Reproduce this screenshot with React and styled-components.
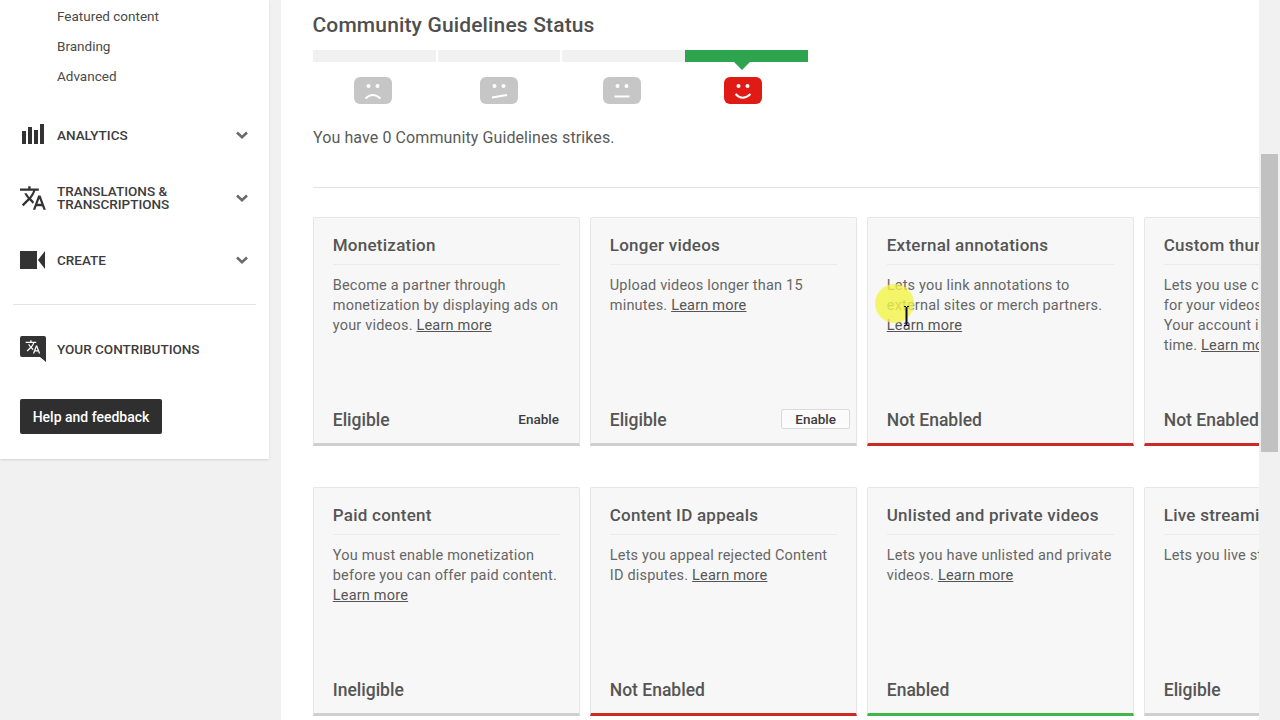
import styled, { createGlobalStyle } from 'styled-components';

const GlobalStyle = createGlobalStyle`
  html, body {
    margin: 0;
    padding: 0;
    background: #f1f1f1;
    font-family: Roboto, "Liberation Sans", sans-serif;
    overflow: hidden;
  }
  * {
    box-sizing: border-box;
  }
`;

const Page = styled.div`
  position: relative;
  display: flex;
  width: 1280px;
  height: 720px;
  overflow: hidden;
  background: #f1f1f1;
`;

const Sidebar = styled.nav`
  flex: none;
  width: 269px;
  height: 459px;
  margin-right: 12px;
  padding-top: 1px;
  background: #fff;
  box-shadow: 0 1px 2px rgba(0, 0, 0, 0.12);
`;

const SubItem = styled.div`
  height: 30px;
  padding-left: 57px;
  font-size: 13.5px;
  line-height: 30px;
  color: #4a4a4a;
`;

const NavRow = styled.div`
  display: flex;
  align-items: center;
  height: 26px;
  margin-top: ${(p) => p.$top || 0}px;
  padding: 0 20px;
`;

const NavIcon = styled.span`
  flex: none;
  display: flex;
  align-items: center;
  width: 37px;
  height: 26px;
  color: #333;
`;

const NavLabel = styled.span`
  flex: 1;
  font-size: 13.5px;
  font-weight: 500;
  line-height: 13px;
  color: #3c3c3c;
  text-transform: uppercase;
`;

const Chevron = styled.svg`
  flex: none;
  width: 12px;
  height: 8px;
  margin-right: 1px;
  fill: none;
  stroke: #6a6a6a;
  stroke-width: 2.6;
`;

const SideDivider = styled.hr`
  height: 1px;
  margin: 31px 13px 31px;
  border: none;
  background: #e4e4e4;
`;

const HelpButton = styled.button`
  display: block;
  width: 142px;
  height: 35px;
  margin: 37px 0 0 20px;
  padding: 0;
  background: #2f2f2f;
  border: none;
  border-radius: 2px;
  font-family: inherit;
  font-size: 14px;
  font-weight: 500;
  color: #fff;
`;

const Main = styled.main`
  flex: 1;
  min-width: 0;
  height: 720px;
  padding: 13px 0 0 32px;
  overflow: hidden;
  background: #fff;
`;

const Title = styled.h2`
  margin: 0 0 0 -0.5px;
  font-size: 21px;
  font-weight: 500;
  line-height: 24px;
  letter-spacing: 0.15px;
  color: #4f4f4f;
`;

const StrikeBar = styled.div`
  display: flex;
  width: 495px;
  height: 12px;
  margin-top: 13px;
`;

const Segment = styled.div`
  position: relative;
  flex: none;
  width: ${(p) => p.$width}px;
  margin-right: ${(p) => p.$gap || 0}px;
  background: ${(p) => (p.$active ? '#2ea44f' : '#f1f1f1')};

  ${(p) =>
    p.$active &&
    `
    &::after {
      content: '';
      position: absolute;
      top: 12px;
      left: 49px;
      border-left: 8px solid transparent;
      border-right: 8px solid transparent;
      border-top: 8px solid #2ea44f;
    }
  `}
`;

const Faces = styled.div`
  display: flex;
  height: 27px;
  margin-top: 15px;
`;

const Face = styled.svg`
  display: block;
  flex: none;
  width: 38px;
  height: 27px;
  margin-left: ${(p) => p.$left}px;
`;

const Strikes = styled.p`
  margin: 24px 0 0;
  font-size: 16px;
  line-height: 20px;
  letter-spacing: 0.1px;
  color: #5a5a5a;
`;

const Divider = styled.hr`
  height: 1px;
  margin: 39px 0 29px;
  border: none;
  background: #e4e4e4;
`;

const CardRow = styled.div`
  display: flex;
  gap: 10px;
  margin-bottom: 41px;
`;

const Card = styled.section`
  flex: none;
  display: flex;
  flex-direction: column;
  width: 267px;
  height: 229px;
  padding: 0 19px 0 18.75px;
  background: #f7f7f7;
  border: 1px solid #e6e6e6;
  border-bottom: 3px solid ${(p) => p.$accent};
  border-radius: 2px 2px 0 0;
`;

const CardTitle = styled.h3`
  height: 47px;
  margin: 0;
  font-size: 17px;
  font-weight: 500;
  line-height: 55px;
  letter-spacing: 0.25px;
  white-space: nowrap;
  color: #555;
  border-bottom: 1px solid #ebebeb;
`;

const CardText = styled.p`
  margin: 11px 0 0;
  font-size: 14.5px;
  line-height: 20px;
  letter-spacing: 0.2px;
  color: #666;

  a {
    color: #555;
    text-decoration: underline;
  }
`;

const CardFooter = styled.div`
  display: flex;
  align-items: center;
  justify-content: space-between;
  height: 28px;
  margin-top: auto;
  margin-bottom: 9px;
`;

const Status = styled.span`
  font-size: 17.5px;
  font-weight: 500;
  white-space: nowrap;
  color: #555;
`;

const EnableButton = styled.button`
  height: 20px;
  margin-right: -13px;
  margin-bottom: 2px;
  padding: 0 13px;
  background: ${(p) => (p.$outlined ? '#fbfbfb' : 'transparent')};
  border: 1px solid ${(p) => (p.$outlined ? '#d9d9d9' : 'transparent')};
  border-radius: 2px;
  font-family: inherit;
  font-size: 13.5px;
  font-weight: 500;
  color: #3c3c3c;
`;

const ScrollTrack = styled.div`
  flex: none;
  width: 21px;
  padding: 154px 2px 0;
  background: #f1f1f1;
`;

const ScrollThumb = styled.div`
  height: 298px;
  background: #c1c1c1;
`;

const Highlight = styled.div`
  position: absolute;
  top: 284px;
  left: 875px;
  width: 39px;
  height: 39px;
  background: radial-gradient(circle, rgba(244, 244, 70, 0.8) 60%, rgba(244, 244, 70, 0.5) 100%);
  border-radius: 50%;
`;

const TextCursor = styled.svg`
  position: absolute;
  top: 305px;
  left: 902px;
  width: 9px;
  height: 22px;
`;

const AnalyticsIcon = () => (
  <svg width="24" height="22" viewBox="0 0 24 22" fill="currentColor">
    <rect x="2" y="7" width="4" height="13" />
    <rect x="8" y="3" width="4" height="17" />
    <rect x="14" y="6" width="4" height="14" />
    <rect x="20" y="0" width="4" height="20" />
  </svg>
);

const TranslateIcon = () => (
  <svg width="27" height="27" viewBox="1 1 23 23" fill="currentColor">
    <path d="M12.87 15.07l-2.54-2.51.03-.03c1.74-1.94 2.98-4.17 3.71-6.53H17V4h-7V2H8v2H1v1.99h11.17C11.5 7.92 10.44 9.75 9 11.35 8.07 10.32 7.3 9.19 6.69 8h-2c.73 1.63 1.73 3.17 2.98 4.56l-5.09 5.02L4 19l5-5 3.11 3.11.76-2.04zM18.5 10h-2L12 22h2l1.12-3h4.75L21 22h2l-4.5-12zm-2.62 7l1.62-4.33L19.12 17h-3.24z" />
  </svg>
);

const CreateIcon = () => (
  <svg width="26" height="18" viewBox="0 0 26 18" fill="currentColor">
    <rect x="0" y="0" width="17" height="18" />
    <path d="M25 0v18L18 9z" />
  </svg>
);

const ContributionsIcon = () => (
  <svg width="26" height="26" viewBox="0 0 26 26">
    <path d="M2 0h22a2 2 0 0 1 2 2v24l-6-5H2a2 2 0 0 1-2-2V2a2 2 0 0 1 2-2z" fill="#333" />
    <g transform="translate(5 3) scale(0.66)">
      <path
        fill="#fff"
        d="M12.87 15.07l-2.54-2.51.03-.03c1.74-1.94 2.98-4.17 3.71-6.53H17V4h-7V2H8v2H1v1.99h11.17C11.5 7.92 10.44 9.75 9 11.35 8.07 10.32 7.3 9.19 6.69 8h-2c.73 1.63 1.73 3.17 2.98 4.56l-5.09 5.02L4 19l5-5 3.11 3.11.76-2.04zM18.5 10h-2L12 22h2l1.12-3h4.75L21 22h2l-4.5-12zm-2.62 7l1.62-4.33L19.12 17h-3.24z"
      />
    </g>
  </svg>
);

const ChevronDown = () => (
  <Chevron viewBox="0 0 12 8">
    <path d="M1 1.5L6 6.2l5-4.7" />
  </Chevron>
);

const mouths = {
  sad: 'M11.5 21.5q7-7 15 0',
  skew: 'M12 20.5l15-2.5',
  flat: 'M11.5 19.5h15',
  happy: 'M11.5 17q7 7.5 15 0',
};

const StrikeFace = ({ mood, color, left }) => (
  <Face viewBox="0 0 38 27" $left={left}>
    <rect width="38" height="27" rx="6" fill={color} />
    <circle cx="14.5" cy="9" r="2" fill="#fff" />
    <circle cx="23.5" cy="9" r="2" fill="#fff" />
    <path d={mouths[mood]} fill="none" stroke="#fff" strokeWidth="2" />
  </Face>
);

const firstRow = [
  {
    title: 'Monetization',
    text: 'Become a partner through monetization by displaying ads on your videos. ',
    status: 'Eligible',
    accent: '#cfcfcf',
    enable: 'plain',
  },
  {
    title: 'Longer videos',
    text: 'Upload videos longer than 15 minutes. ',
    status: 'Eligible',
    accent: '#cfcfcf',
    enable: 'outlined',
  },
  {
    title: 'External annotations',
    text: 'Lets you link annotations to external sites or merch partners. ',
    status: 'Not Enabled',
    accent: '#cc2a26',
  },
  {
    title: 'Custom thumbnails',
    text: (
      <>
        Lets you use custom thumbnails
        <br />
        for your videos.
        <br />
        Your account is not eligible at this time.{' '}
      </>
    ),
    status: 'Not Enabled',
    accent: '#cc2a26',
  },
];

const secondRow = [
  {
    title: 'Paid content',
    text: 'You must enable monetization before you can offer paid content. ',
    status: 'Ineligible',
    accent: '#cfcfcf',
  },
  {
    title: 'Content ID appeals',
    text: 'Lets you appeal rejected Content ID disputes. ',
    status: 'Not Enabled',
    accent: '#cc2a26',
  },
  {
    title: 'Unlisted and private videos',
    text: 'Lets you have unlisted and private videos. ',
    status: 'Enabled',
    accent: '#3fb54a',
  },
  {
    title: 'Live streaming',
    text: 'Lets you live stream.',
    status: 'Eligible',
    accent: '#cfcfcf',
    noLink: true,
  },
];

const FeatureCard = ({ title, text, status, accent, enable, noLink }) => (
  <Card $accent={accent}>
    <CardTitle>{title}</CardTitle>
    <CardText>
      {text}
      {!noLink && <a href="#learn">Learn more</a>}
    </CardText>
    <CardFooter>
      <Status>{status}</Status>
      {enable && <EnableButton $outlined={enable === 'outlined'}>Enable</EnableButton>}
    </CardFooter>
  </Card>
);

const App = () => (
  <Page>
    <GlobalStyle />
    <Sidebar>
      <SubItem>Featured content</SubItem>
      <SubItem>Branding</SubItem>
      <SubItem>Advanced</SubItem>
      <NavRow $top={31}>
        <NavIcon>
          <AnalyticsIcon />
        </NavIcon>
        <NavLabel>Analytics</NavLabel>
        <ChevronDown />
      </NavRow>
      <NavRow $top={37}>
        <NavIcon>
          <TranslateIcon />
        </NavIcon>
        <NavLabel>
          Translations &amp;
          <br />
          Transcriptions
        </NavLabel>
        <ChevronDown />
      </NavRow>
      <NavRow $top={36}>
        <NavIcon>
          <CreateIcon />
        </NavIcon>
        <NavLabel>Create</NavLabel>
        <ChevronDown />
      </NavRow>
      <SideDivider />
      <NavRow>
        <NavIcon>
          <ContributionsIcon />
        </NavIcon>
        <NavLabel>Your contributions</NavLabel>
      </NavRow>
      <HelpButton>Help and feedback</HelpButton>
    </Sidebar>
    <Main>
      <Title>Community Guidelines Status</Title>
      <StrikeBar>
        <Segment $width={123} $gap={2} />
        <Segment $width={122} $gap={2} />
        <Segment $width={123} />
        <Segment $width={123} $active />
      </StrikeBar>
      <Faces>
        <StrikeFace mood="sad" color="#c6c6c6" left={41} />
        <StrikeFace mood="skew" color="#c6c6c6" left={88} />
        <StrikeFace mood="flat" color="#c6c6c6" left={85} />
        <StrikeFace mood="happy" color="#e01b16" left={83} />
      </Faces>
      <Strikes>You have 0 Community Guidelines strikes.</Strikes>
      <Divider />
      <CardRow>
        {firstRow.map((card) => (
          <FeatureCard key={card.title} {...card} />
        ))}
      </CardRow>
      <CardRow>
        {secondRow.map((card) => (
          <FeatureCard key={card.title} {...card} />
        ))}
      </CardRow>
    </Main>
    <ScrollTrack>
      <ScrollThumb />
    </ScrollTrack>
    <Highlight />
    <TextCursor viewBox="0 0 9 22">
      <path d="M4.5 2v18" stroke="#0a0a30" strokeWidth="2" />
      <path d="M2 1.5h2M5 1.5h2M2 20.5h2M5 20.5h2" stroke="#0a0a30" strokeWidth="1" />
    </TextCursor>
  </Page>
);

export default App;
